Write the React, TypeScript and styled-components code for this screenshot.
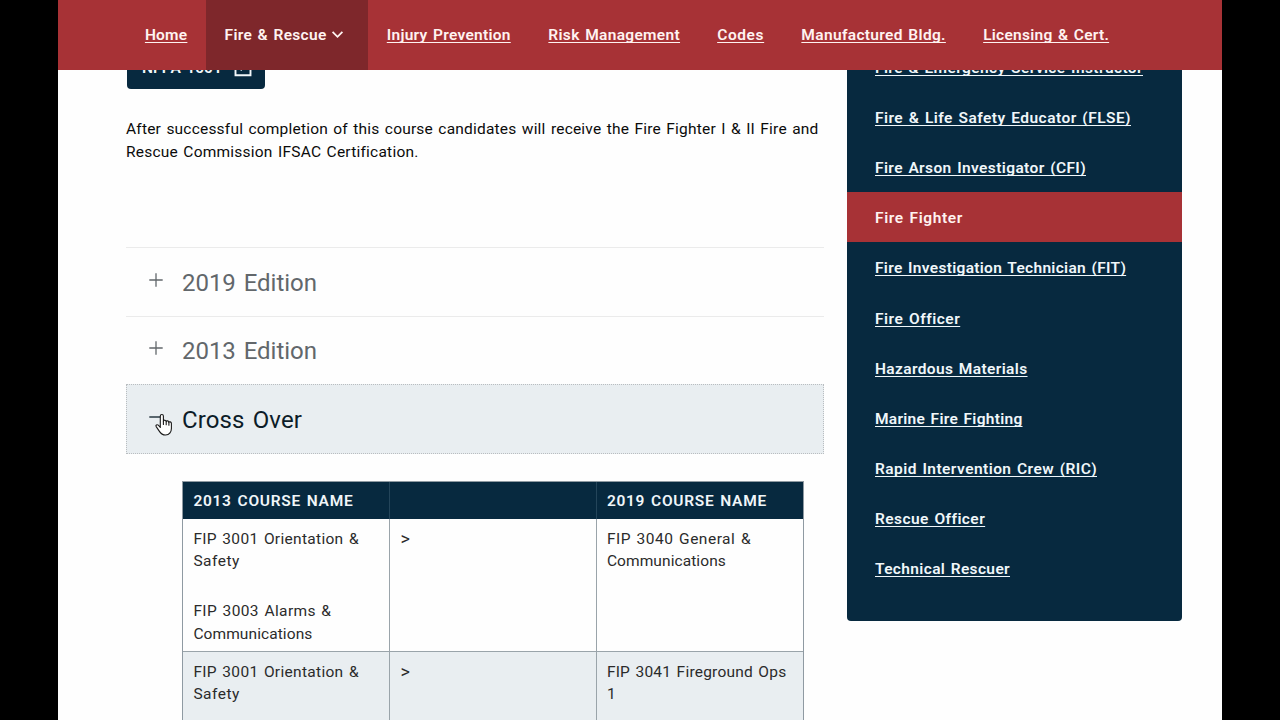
import React from "react";
import styled, { createGlobalStyle } from "styled-components";

const navy = "#07293f";
const red = "#a73236";
const pale = "#e9eef1";

const GlobalStyle = createGlobalStyle`
  * { box-sizing: border-box; }
  body {
    margin: 0;
    background: #000;
    overflow: hidden;
    font: 400 15.5px/22.3px Roboto, "Liberation Sans", sans-serif;
    word-spacing: 1.3px;
    color: #0b0b0b;
  }
`;

const Page = styled.div`
  width: 1164px;
  height: 720px;
  margin-left: 58px;
  background: #fefefe;
  overflow: hidden;
`;

const Header = styled.header`
  position: relative;
  z-index: 2;
  height: 70.4px;
  padding-left: 68.3px;
  background: ${red};
  display: flex;
`;

const NavItem = styled.a<{ $width: number; $track: number; $active?: boolean }>`
  flex: none;
  display: flex;
  align-items: center;
  gap: 4.5px;
  width: ${(p) => p.$width}px;
  padding: 0 0 1px 18.6px;
  white-space: nowrap;
  font-weight: 600;
  letter-spacing: ${(p) => p.$track}px;
  color: #fff3f1;
  background: ${(p) => (p.$active ? "#7e272b" : "transparent")};
  text-decoration: ${(p) => (p.$active ? "none" : "underline")};
  text-decoration-thickness: 1px;
  text-underline-offset: 2px;
  text-decoration-skip-ink: none;
`;

const Text = styled.span<{ $track: number }>`
  white-space: nowrap;
  letter-spacing: ${(p) => p.$track}px;
`;

const Body = styled.div`
  display: flex;
  align-items: flex-start;
  margin-top: -28.6px;
`;

const Main = styled.main`
  width: 698px;
  margin-left: 68px;
  padding-top: 4px;
`;

const Button = styled.a`
  display: inline-flex;
  align-items: center;
  gap: 12px;
  width: 138px;
  height: 43px;
  margin-left: 0.5px;
  padding: 2px 0 0 15.5px;
  border-radius: 4px;
  background: ${navy};
  color: #f2f7fa;
  font-weight: 600;
`;

const Intro = styled.p`
  margin: 29.5px 0 84.5px;
  display: flex;
  flex-direction: column;
`;

const Section = styled.button<{ $open?: boolean }>`
  width: 100%;
  height: ${(p) => (p.$open ? 70 : 68.4)}px;
  display: flex;
  align-items: center;
  padding: 1px 0 0 ${(p) => (p.$open ? 22 : 23)}px;
  border: 0;
  border-top: 1px solid #ebebeb;
  ${(p) => p.$open && "border: 1px dotted #b9bdc0;"}
  background: ${(p) => (p.$open ? pale : "transparent")};
  color: ${(p) => (p.$open ? "#0c1c28" : "#62676b")};
  font: 400 24px/30px Roboto, sans-serif;
  word-spacing: 2px;
`;

const Sign = styled.svg`
  width: 14px;
  height: 14px;
  margin: 0 19px 6px 0;
  fill: none;
  stroke: currentColor;
  stroke-width: 1.3;
`;

const Table = styled.div`
  width: 622px;
  margin: 26.4px 0 0 56px;
  border: 1px solid #8f9aa2;
`;

const Row = styled.div<{ $shade?: boolean; $head?: boolean }>`
  display: grid;
  grid-template-columns: 207px 206.5px 1fr;
  height: ${(p) => (p.$head ? 37.5 : 133)}px;
  background: ${(p) => (p.$head ? navy : p.$shade ? pale : "transparent")};
  color: ${(p) => (p.$head ? "#f0f6f9" : "#2b2b2b")};
  font-weight: ${(p) => (p.$head ? 600 : 400)};
  border-bottom: ${(p) => (p.$head ? 0 : 1)}px solid #9aa4aa;
`;

const Cell = styled.div<{ $head?: boolean }>`
  padding: ${(p) => (p.$head ? 8.5 : 9)}px 10px 0 10.4px;
  border-right: 1px solid ${(p) => (p.$head ? "#24455a" : "#9aa4aa")};
  &:last-child { border-right: 0; }
`;

const Arrow = styled.span`
  font-size: 18px;
`;

const Para = styled.p`
  margin: 0 0 27.8px;
  display: flex;
  flex-direction: column;
`;

const Sidebar = styled.aside`
  width: 335px;
  margin-left: 23px;
  padding-bottom: 27.6px;
  border-radius: 0 0 4px 4px;
  background: ${navy};
  font-weight: 600;
`;

const SideLink = styled.a<{ $active?: boolean }>`
  display: flex;
  align-items: center;
  height: 50.13px;
  padding: 2.4px 0 0 28px;
  color: ${(p) => (p.$active ? "#fff3f1" : "#f0f7fa")};
  background: ${(p) => (p.$active ? red : "transparent")};
  text-decoration: ${(p) => (p.$active ? "none" : "underline")};
  text-decoration-thickness: 1px;
  text-underline-offset: 2px;
  text-decoration-skip-ink: none;
`;

const Pointer = styled.svg`
  position: absolute;
  left: 155px;
  top: 413px;
  width: 18px;
  height: 23px;
`;

type Line = [string, number];

const side: Line[] = [
  ["Fire & Emergency Service Instructor", 0.392],
  ["Fire & Life Safety Educator (FLSE)", 0.463],
  ["Fire Arson Investigator (CFI)", 0.384],
  ["Fire Fighter", 0.615],
  ["Fire Investigation Technician (FIT)", 0.309],
  ["Fire Officer", 0.5],
  ["Hazardous Materials", 0.367],
  ["Marine Fire Fighting", 0.283],
  ["Rapid Intervention Crew (RIC)", 0.441],
  ["Rescue Officer", 0.43],
  ["Technical Rescuer", 0.355],
];

const Lines = ({ items }: { items: Line[] }) => (
  <>
    {items.map(([t, k]) => (
      <Text key={t} $track={k}>{t}</Text>
    ))}
  </>
);

const Plus = () => (
  <Sign viewBox="0 0 14 14"><path d="M0.3 7H13.7M7 0.3V13.7" /></Sign>
);

export default function App() {
  return (
    <>
      <GlobalStyle />
      <Page>
        <Header>
          <NavItem $width={79.7} $track={0.237}>Home</NavItem>
          <NavItem $width={162.2} $track={0.314} $active>
            Fire &amp; Rescue
            <svg width="13" height="10" viewBox="0 0 13 10" fill="none" stroke="currentColor" strokeWidth="1.8">
              <path d="M1.6 1.8L6.5 6.8L11.4 1.8" />
            </svg>
          </NavItem>
          <NavItem $width={161.6} $track={0.28}>Injury Prevention</NavItem>
          <NavItem $width={168.8} $track={0.32}>Risk Management</NavItem>
          <NavItem $width={84.2} $track={0.612}>Codes</NavItem>
          <NavItem $width={181.8} $track={0.337}>Manufactured Bldg.</NavItem>
          <NavItem $width={164} $track={0.272}>Licensing &amp; Cert.</NavItem>
        </Header>
        <Body>
          <Main>
            <Button>
              <Text $track={0.095}>NFPA 1001</Text>
              <svg width="18" height="18" viewBox="0 0 18 18" fill="none" stroke="currentColor" strokeWidth="1.9">
                <path d="M8 1.5H1.5V16.2H16.5V9.5M11 1.5H16.5V7M16.5 1.5L6.5 11.2" />
              </svg>
            </Button>
            <Intro>
              <Lines
                items={[
                  ["After successful completion of this course candidates will receive the Fire Fighter I & II Fire and", 0.202],
                  ["Rescue Commission IFSAC Certification.", 0.224],
                ]}
              />
            </Intro>
            <Section><Plus /><Text $track={-0.04}>2019 Edition</Text></Section>
            <Section><Plus /><Text $track={-0.04}>2013 Edition</Text></Section>
            <Section $open>
              <Sign viewBox="0 0 14 14"><path d="M0.3 7H13.7" /></Sign>
              <Text $track={0.122}>Cross Over</Text>
            </Section>
            <Table>
              <Row $head>
                <Cell $head><Text $track={0.717}>2013 COURSE NAME</Text></Cell>
                <Cell $head />
                <Cell $head><Text $track={0.717}>2019 COURSE NAME</Text></Cell>
              </Row>
              <Row>
                <Cell>
                  <Para><Lines items={[["FIP 3001 Orientation &", 0.31], ["Safety", 0.506]]} /></Para>
                  <Para><Lines items={[["FIP 3003 Alarms &", 0.374], ["Communications", 0.088]]} /></Para>
                </Cell>
                <Cell><Arrow>&gt;</Arrow></Cell>
                <Cell>
                  <Para><Lines items={[["FIP 3040 General &", 0.5], ["Communications", 0.088]]} /></Para>
                </Cell>
              </Row>
              <Row $shade>
                <Cell>
                  <Para><Lines items={[["FIP 3001 Orientation &", 0.31], ["Safety", 0.506]]} /></Para>
                </Cell>
                <Cell><Arrow>&gt;</Arrow></Cell>
                <Cell>
                  <Para><Lines items={[["FIP 3041 Fireground Ops", 0.223], ["1", 0]]} /></Para>
                </Cell>
              </Row>
            </Table>
          </Main>
          <Sidebar>
            {side.map(([t, k]) => (
              <SideLink key={t} $active={t === "Fire Fighter"}>
                <Text $track={k}>{t}</Text>
              </SideLink>
            ))}
          </Sidebar>
        </Body>
        <Pointer viewBox="0 0 18 23" fill="#fff" stroke="#1a1a1a" strokeWidth="1.1" strokeLinejoin="round" strokeLinecap="round">
          <path d="M5.3 14.5V3.1C5.3 0.9 8.4 0.9 8.4 3.1V8.3C8.7 6.7 11.2 6.8 11.2 8.6C11.5 7.4 13.9 7.6 13.9 9.4C14.3 8.4 16.4 8.7 16.4 10.5V15.5C16.4 18.5 14.6 22 10.6 22C7.2 22 5.8 20.6 4.6 18.6L1.2 13.6C0.4 12.2 2 11.1 3.3 12.2Z" />
          <path d="M8.4 8.3V11.5M11.2 8.6V11.8M13.9 9.4V12.2" fill="none" />
        </Pointer>
      </Page>
    </>
  );
}
